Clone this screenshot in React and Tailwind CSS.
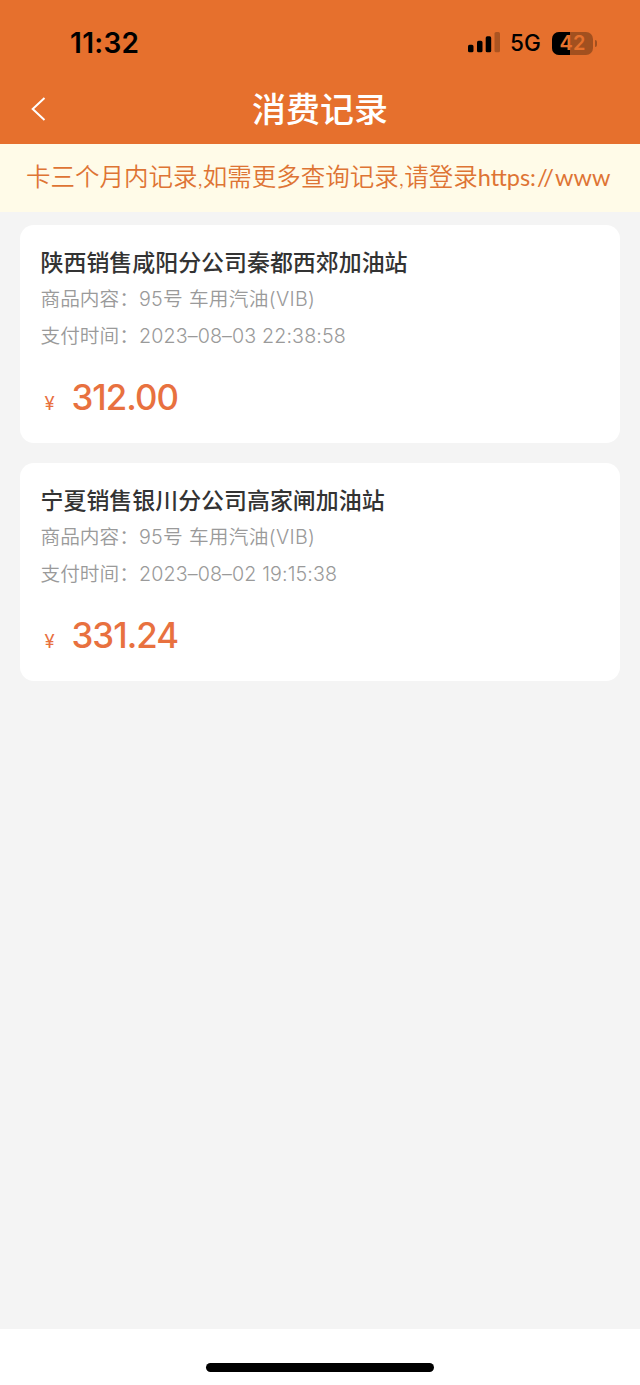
import React from "react";

const records = [
  {
    id: 1,
    station: "陕西销售咸阳分公司秦都西郊加油站",
    product: "95号 车用汽油(VIB)",
    paidAt: "2023–08–03 22:38:58",
    amount: "312.00",
  },
  {
    id: 2,
    station: "宁夏销售银川分公司高家闸加油站",
    product: "95号 车用汽油(VIB)",
    paidAt: "2023–08–02 19:15:38",
    amount: "331.24",
  },
];

function SignalIcon() {
  return (
    <svg width="32" height="22" viewBox="0 0 32 22" className="block">
      <rect x="0" y="12.8" width="5.5" height="7.5" rx="1.6" />
      <rect x="9" y="8.8" width="5.5" height="11.5" rx="1.6" />
      <rect x="17.7" y="4.3" width="5.5" height="16" rx="1.6" />
      <rect x="26.5" y="0" width="5.5" height="20.3" rx="1.6" opacity="0.25" />
    </svg>
  );
}

function Battery({ level }) {
  return (
    <div className="flex items-center">
      <div className="relative flex h-[23px] w-[41px] items-center justify-center overflow-hidden rounded-[7px] bg-[#a2501f]">
        <div className="absolute inset-y-0 left-0 bg-black" style={{ width: `${level + 2}%` }} />
        <span className="relative font-['Inter',sans-serif] text-[20px] leading-none font-semibold text-[#e6722d]">
          {level}
        </span>
      </div>
      <div className="ml-[1.5px] h-[7px] w-[2.5px] rounded-r-full bg-[#a2501f]" />
    </div>
  );
}

function StatusBar() {
  return (
    <div className="flex h-[72px] items-start justify-between pt-[29px] pr-[43px] pl-[70px] text-black">
      <span className="font-['Inter',sans-serif] text-[28px] leading-[28px] font-semibold tracking-[0.3px]">
        11:32
      </span>
      <div className="flex items-center">
        <SignalIcon />
        <span className="ml-[10px] w-[31px] font-['Inter',sans-serif] text-[22.5px] leading-[28px] font-medium">
          5G
        </span>
        <div className="ml-[11px]">
          <Battery level={42} />
        </div>
      </div>
    </div>
  );
}

function RecordCard({ record }) {
  return (
    <div className="h-[217.5px] rounded-[14px] bg-white px-[20.5px] pt-[20px]">
      <h2 className="text-[22.95px] leading-[36px] font-medium text-[#333333]">{record.station}</h2>
      <div className="flex text-[19.7px] leading-[36.6px] font-[350] text-[#9a9a9a]">
        <span>商品内容：</span>
        <span className="tracking-[0.3px]">{record.product}</span>
      </div>
      <div className="flex text-[19.7px] leading-[36.6px] font-[350] text-[#9a9a9a]">
        <span>支付时间：</span>
        <span className="tracking-[0.12px]">{record.paidAt}</span>
      </div>
      <div className="mt-[21.5px] flex items-baseline text-[#e8713f]">
        <span className="w-[31px] pl-[4px] text-[18.5px] leading-none">¥</span>
        <span className="text-[34.8px] leading-[42px] font-medium tracking-[-0.95px]">{record.amount}</span>
      </div>
    </div>
  );
}

export default function App() {
  return (
    <div className="flex h-[1385px] w-[640px] flex-col overflow-hidden bg-[#f4f4f4] font-['Inter','Noto_Sans_CJK_SC',sans-serif]">
      <header className="h-[144px] bg-[#e6702d]">
        <StatusBar />
        <div className="grid h-[72px] grid-cols-[80px_1fr_80px] items-center pt-px">
          <button className="pl-[31px]">
            <svg width="15" height="24" viewBox="0 0 15 24" fill="none" stroke="white" strokeWidth="2">
              <path d="M13.5 1 L1.7 12 L13.5 23" />
            </svg>
          </button>
          <h1 className="pt-[3px] text-center text-[34px] leading-[50px] font-medium text-white">消费记录</h1>
        </div>
      </header>

      <div className="flex h-[68px] items-center bg-[#fffbe8] px-[26px] pb-[2px]">
        <p className="flex-1 overflow-hidden font-['Lato','Noto_Sans_CJK_SC',sans-serif] text-[24.5px] leading-[36px] whitespace-nowrap text-[#de7434]">
          <span className="font-[350]">卡三个月内记录,如需更多查询记录,请登录</span>
          <span className="text-[23.5px]">https</span>
          <span className="text-[23.5px] tracking-[1px]">://</span>
          <span className="text-[23.5px]">www</span>
        </p>
      </div>

      <main className="flex flex-1 flex-col gap-[20.5px] px-5 pt-[13px]">
        {records.map((record) => (
          <RecordCard key={record.id} record={record} />
        ))}
      </main>

      <footer className="flex h-[56px] justify-center bg-white pt-[34px]">
        <div className="h-[9px] w-[228px] rounded-full bg-black" />
      </footer>
    </div>
  );
}
